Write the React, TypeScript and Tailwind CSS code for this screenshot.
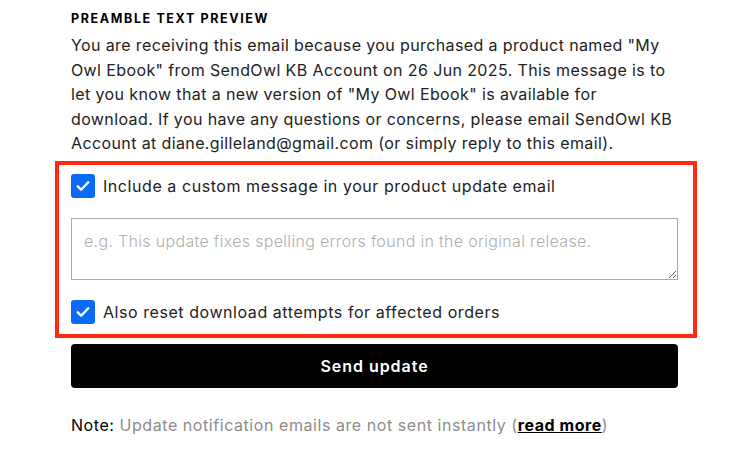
import React from 'react';

const font = { fontFamily: 'Inter, "Open Sans", sans-serif' };

const CheckBox = () => (
  <span className="flex h-6 w-6 shrink-0 items-center justify-center rounded-[3px] bg-[#0a6cf5]">
    <svg viewBox="0 0 24 24" className="h-[18px] w-[18px]" fill="none" stroke="white" strokeWidth={3.2} strokeLinecap="round" strokeLinejoin="round">
      <path d="M5 12.5l4.5 4.5L19 7" />
    </svg>
  </span>
);

export default function App() {
  return (
    <div className="min-h-[474px] w-[752px] bg-white text-[#222] tracking-[0.035em]" style={font}>
      <div className="px-[71px] pt-[10px] w-[749px]">
        <h3 className="text-[12.5px] leading-[18px] font-bold uppercase tracking-[0.13em] text-black">Preamble text preview</h3>
        <p className="mt-[5px] text-[16px] leading-[24.5px] tracking-[0.024em]">
          You are receiving this email because you purchased a product named "My Owl Ebook" from SendOwl KB Account on 26 Jun 2025. This message is to let you know that a new version of "My Owl Ebook" is available for download. If you have any questions or concerns, please email SendOwl KB Account at diane.gilleland@gmail.com (or simply reply to this email).
        </p>
      </div>

      <div className="mx-[55px] mt-[5px] w-[642px] border-4 border-[#ff2a12] pl-[12px] pr-[15px] pt-[9px] pb-[10px]">
        <label className="flex h-6 items-center gap-[8px]">
          <CheckBox />
          <span className="text-[16px]">Include a custom message in your product update email</span>
        </label>
        <textarea
          className="mt-[20px] block h-[62px] w-full resize-y border border-[#aaa] px-[12px] py-[10px] text-[16px] font-light tracking-[0.02em] placeholder:text-[#b0b0b0] outline-none"
          placeholder="e.g. This update fixes spelling errors found in the original release."
        />
        <label className="mt-[20px] flex h-6 items-center gap-[8px]">
          <CheckBox />
          <span className="text-[16px]">Also reset download attempts for affected orders</span>
        </label>
      </div>

      <div className="px-[71px] w-[749px]">
        <button className="mt-[6px] h-[44px] w-full rounded-[4px] bg-black text-[16px] font-semibold tracking-[0.06em] text-white">
          Send update
        </button>
        <p className="mt-[25px] text-[16px] leading-[24px] text-black">
          Note: <span className="text-[#8c8c8c]">Update notification emails are not sent instantly (</span>
          <a className="font-bold text-black underline">read more</a>
          <span className="text-[#8c8c8c]">)</span>
        </p>
      </div>
    </div>
  );
}
